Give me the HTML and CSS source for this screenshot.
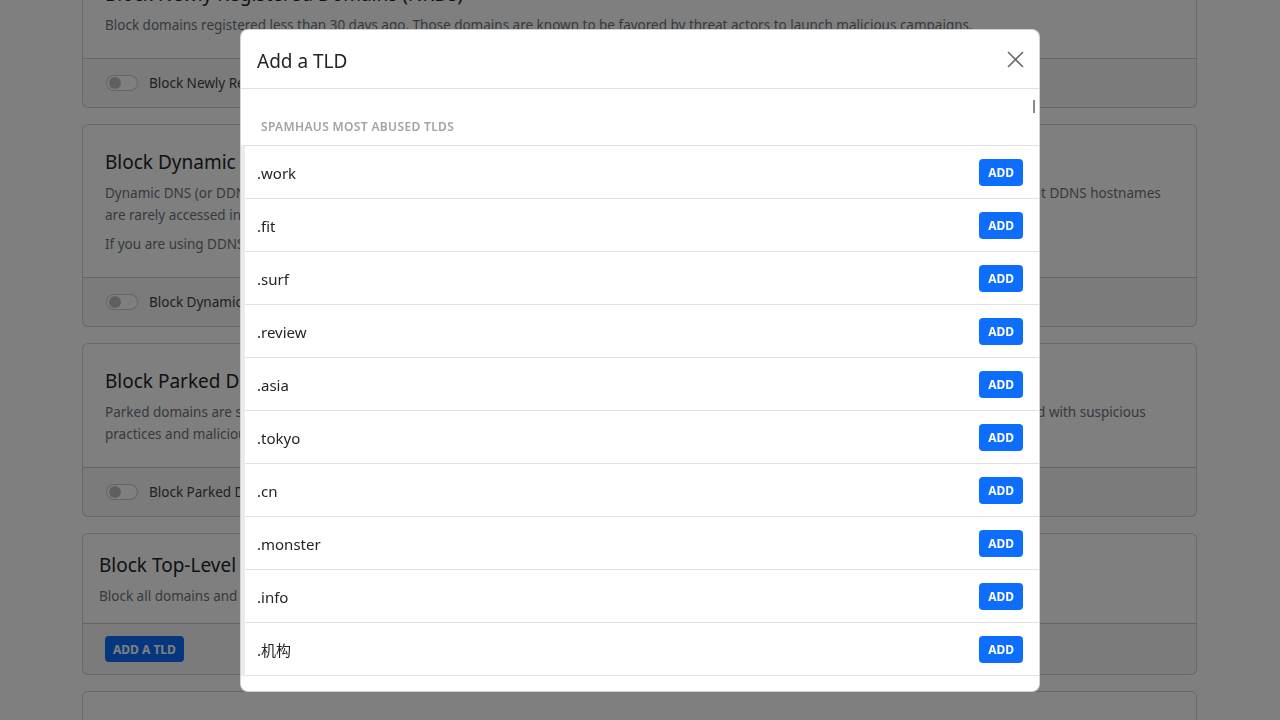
FILE: index.html
```html
<!DOCTYPE html>
<html lang="en">
<head>
    <meta charset="UTF-8">
    <meta name="viewport" content="width=device-width, initial-scale=1.0">
    <title>Security - Add a TLD</title>
    <link rel="stylesheet" href="styles.css">
</head>
<body>

    <div class="page">
        <div class="card">
            <div class="card-body">
                <h5 class="card-title">Block Newly Registered Domains (NRDs)</h5>
                <p>Block domains registered less than 30 days ago. Those domains are known to be favored by threat actors to launch malicious campaigns.</p>
            </div>
            <div class="card-footer">
                <label class="switch"><span class="switch-track"></span>Block Newly Registered Domains</label>
            </div>
        </div>

        <div class="card">
            <div class="card-body">
                <h5 class="card-title">Block Dynamic DNS Hostnames</h5>
                <p>Dynamic DNS (or DDNS) services let anyone host content on a home internet connection via a free subdomain. Unlike traditional domains, most legit DDNS hostnames are rarely accessed in a normal browsing session and are often used by malware.</p>
                <p>If you are using DDNS for your own needs, you can add your hostnames to your Allowlist.</p>
            </div>
            <div class="card-footer">
                <label class="switch"><span class="switch-track"></span>Block Dynamic DNS Hostnames</label>
            </div>
        </div>

        <div class="card">
            <div class="card-body">
                <h5 class="card-title">Block Parked Domains</h5>
                <p>Parked domains are single-page websites often loaded with ads and with no valuable content. They are often owned by squatters and are associated with suspicious practices and malicious activities such as phishing and malware distribution.</p>
            </div>
            <div class="card-footer">
                <label class="switch"><span class="switch-track"></span>Block Parked Domains</label>
            </div>
        </div>

        <div class="card">
            <div class="card-body compact">
                <h5 class="card-title">Block Top-Level Domains (TLDs)</h5>
                <p>Block all domains and subdomains belonging to specific TLDs.</p>
            </div>
            <div class="card-footer">
                <button class="btn-primary">Add a TLD</button>
            </div>
        </div>

        <div class="card">
            <div class="card-body">
                <h5 class="card-title">Block Child Sexual Abuse Material</h5>
                <p>Block domains hosting child sexual abuse material.</p>
            </div>
        </div>
    </div>

    <div class="backdrop">
        <div class="modal">
            <div class="modal-header">
                <h5 class="modal-title">Add a TLD</h5>
                <button class="btn-close" aria-label="Close">
                    <svg width="17" height="17" viewBox="0 0 17 17"><path d="M1 1L16 16M16 1L1 16" stroke="#6c6c6c" stroke-width="1.6" fill="none"/></svg>
                </button>
            </div>
            <div class="modal-body">
                <div class="scroll-hint"><span></span></div>
                <div class="section-label">Spamhaus most abused TLDs</div>
                <ul class="tld-list">
                    <li><span>.work</span><button class="btn-add">Add</button></li>
                    <li><span>.fit</span><button class="btn-add">Add</button></li>
                    <li><span>.surf</span><button class="btn-add">Add</button></li>
                    <li><span>.review</span><button class="btn-add">Add</button></li>
                    <li><span>.asia</span><button class="btn-add">Add</button></li>
                    <li><span>.tokyo</span><button class="btn-add">Add</button></li>
                    <li><span>.cn</span><button class="btn-add">Add</button></li>
                    <li><span>.monster</span><button class="btn-add">Add</button></li>
                    <li><span>.info</span><button class="btn-add">Add</button></li>
                    <li><span>.机构</span><button class="btn-add">Add</button></li>
                </ul>
            </div>
        </div>
    </div>

</body>
</html>
```

FILE: styles.css
```css
body {
    margin: 0;
    overflow: hidden;
    background-color: #fff;
    color: #212529;
    font-family: "Noto Sans", "Noto Sans CJK SC", sans-serif;
}
.page {
    display: flex;
    flex-direction: column;
    gap: 16px;
    width: 1115px;
    margin-top: -44px; /* page is scrolled down a bit */
    padding-left: 82px;
}
.card {
    background-color: #fff;
    border: 1px solid rgba(0,0,0,0.175);
    border-radius: 6px;
}
.card-body {
    padding: 22px;
}
.card-body.compact {
    padding: 16px;
}
.card-title {
    margin: 0 0 5px;
    font-size: 19px;
    font-weight: 400;
    line-height: 30px;
}
.card p {
    margin: 0 0 7px;
    font-size: 13.5px;
    line-height: 22px;
    color: #6c757d;
}
.card p:last-child {
    margin-bottom: 0;
}
.card-footer {
    display: flex;
    align-items: center;
    min-height: 24px;
    padding: 12px 22px;
    border-top: 1px solid rgba(0,0,0,0.175);
    background-color: rgba(0,0,0,0.03);
}
.switch {
    display: flex;
    align-items: center;
    gap: 11px;
    font-size: 13.5px;
    color: #3d4248;
}
.switch-track {
    position: relative;
    width: 30px;
    height: 14px;
    margin-left: 1px;
    border: 1px solid rgba(0,0,0,0.2);
    border-radius: 8px;
    background-color: #fff;
}
.switch-track::before {
    content: "";
    position: absolute;
    left: 2px;
    top: 1px;
    width: 12px;
    height: 12px;
    border-radius: 50%;
    background-color: rgba(0,0,0,0.25);
}
.btn-primary {
    height: 26px;
    padding: 0 8px;
    border: none;
    border-radius: 4px;
    font-family: inherit;
    font-size: 12px;
    font-weight: 700;
    text-transform: uppercase;
    color: #fff;
    background-color: #0d6efd;
}

/* modal */
.backdrop {
    position: fixed;
    inset: 0;
    display: flex;
    justify-content: center;
    padding: 29px 0 28px;
    box-sizing: border-box;
    background-color: rgba(0,0,0,0.5);
}
.modal {
    display: flex;
    flex-direction: column;
    width: 800px;
    box-sizing: border-box;
    overflow: hidden;
    background-color: #fff;
    border: 1px solid rgba(0,0,0,0.175);
    border-radius: 8px;
}
.modal-header {
    display: flex;
    align-items: center;
    justify-content: space-between;
    height: 58px;
    padding: 0 15px 0 16px;
    border-bottom: 1px solid #dee2e6;
}
.modal-title {
    margin: 4px 0 0;
    font-size: 19px;
    font-weight: 400;
    line-height: 30px;
}
.btn-close {
    display: flex;
    padding: 0;
    border: none;
    background: none;
}
.modal-body {
    flex: 1;
    overflow: hidden;
}
.scroll-hint {
    display: flex;
    justify-content: flex-end;
    height: 18px;
    padding: 11px 4px 0 0;
}
.scroll-hint span {
    width: 2px;
    height: 13px;
    background-color: #8a8a8a;
}
.section-label {
    margin-bottom: 9px;
    padding: 0 20px;
    font-size: 12px;
    font-weight: 600;
    line-height: 18px;
    letter-spacing: 0.35px;
    text-transform: uppercase;
    color: #a3a3a3;
}
.tld-list {
    margin: 0;
    padding: 0;
    list-style: none;
    border-top: 1px solid #dee2e6;
    border-left: 4px solid #e9ecef;
}
.tld-list li {
    display: flex;
    align-items: center;
    justify-content: space-between;
    padding: 13px 16px 12px 12px;
    border-bottom: 1px solid #dee2e6;
    font-size: 15px;
    line-height: 24px;
}
.btn-add {
    height: 27px;
    padding: 0 9px;
    border: none;
    border-radius: 4px;
    font-family: inherit;
    font-size: 12px;
    font-weight: 700;
    text-transform: uppercase;
    color: #fff;
    background-color: #0d6efd;
}
```
